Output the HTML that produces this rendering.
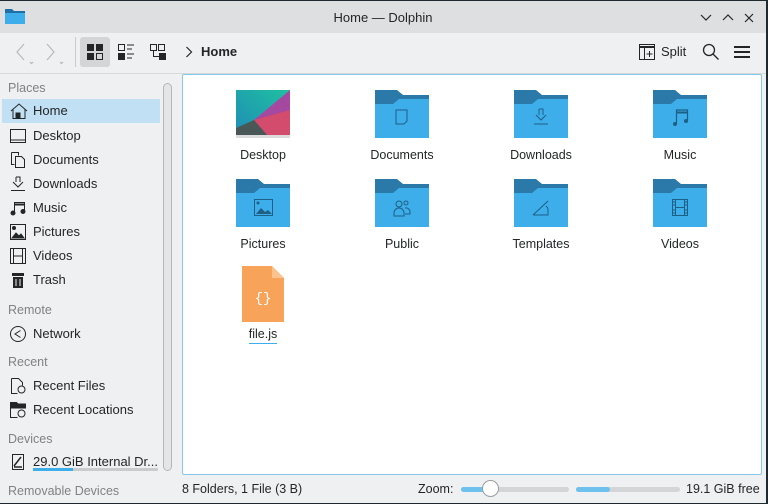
<!DOCTYPE html>
<html><head><meta charset="utf-8">
<style>
*{margin:0;padding:0;box-sizing:border-box}
body{width:768px;height:504px;overflow:hidden;background:#1d2a30;font-family:"Liberation Sans","DejaVu Sans",sans-serif;font-size:13px;color:#232627;position:relative}
.win{position:absolute;left:0;top:1px;width:766px;height:502px;background:#eff0f1}
.title{position:absolute;left:0;top:0;width:766px;height:32px;background:#dedfe0}
.abs{position:absolute}
.side{position:absolute;left:2px;top:75px;width:160px}
.hdr{position:absolute;left:6px;color:#7f8285;font-size:12.5px}
.it{position:absolute;left:0;width:158px;height:24px;line-height:24px;padding-left:31px}
.it svg{position:absolute;left:8px;top:4px}
.view{position:absolute;left:182px;top:73px;width:580px;height:401px;background:#fff;border:1px solid #86c7ea;border-radius:2px}
.cell{position:absolute;width:120px;text-align:center;font-size:12.5px}
.cell svg{display:block;margin:0 auto}
</style></head><body>
<div class="win">
<div class="title">
<svg class="abs" style="left:5px;top:7px" width="20" height="16" viewBox="0 0 20 16"><path d="M0 1h7l2 2h11v13H0z" fill="#1d6fa5"/><path d="M0 5h20v11H0z" fill="#3daee9"/></svg>
<div class="abs" style="left:0;width:766px;top:9px;text-align:center;font-size:13px">Home — Dolphin</div>
<svg class="abs" style="left:700px;top:11px" width="60" height="12" viewBox="0 0 60 12" fill="none" stroke="#232627" stroke-width="1.2"><path d="M1 3l5 5 5-5M23 8l5-5 5 5M45 2l8 8M53 2l-8 8"/></svg>
</div>
<svg class="abs" style="left:14px;top:40px" width="60" height="26" viewBox="0 0 60 26" fill="none" stroke="#b7b9bb" stroke-width="1.2"><path d="M10 3l-7 8 7 8M33 3l7 8-7 8M16 21l1.5 1.5 1.5-1.5M46 21l1.5 1.5 1.5-1.5"/></svg>
<div class="abs" style="left:75px;top:36px;width:1px;height:30px;background:#c8cacc"></div>
<div class="abs" style="left:80px;top:36px;width:30px;height:30px;background:#d3d5d7;border-radius:3px"></div>
<svg class="abs" style="left:87px;top:43px" width="16" height="16" viewBox="0 0 16 16"><rect x="0" y="0" width="7" height="7" fill="#232627"/><rect x="9" y="0" width="7" height="7" fill="#232627"/><rect x="0" y="9" width="7" height="7" fill="#232627"/><rect x="9.5" y="9.5" width="6" height="6" fill="none" stroke="#232627"/></svg>
<svg class="abs" style="left:118px;top:43px" width="16" height="16" viewBox="0 0 16 16"><rect x=".5" y=".5" width="6" height="6" fill="none" stroke="#232627"/><rect x="0" y="9" width="7" height="7" fill="#232627"/><path d="M9 1h7M9 5h5M9 10h7M9 14h5" stroke="#232627"/></svg>
<svg class="abs" style="left:150px;top:43px" width="16" height="16" viewBox="0 0 16 16"><rect x=".5" y=".5" width="6" height="6" fill="none" stroke="#232627"/><rect x="8.5" y=".5" width="6" height="6" fill="none" stroke="#232627"/><rect x="9" y="9" width="7" height="7" fill="#232627"/><path d="M3.5 7v5.5H9" stroke="#232627" fill="none"/></svg>
<svg class="abs" style="left:185px;top:45px" width="8" height="12" viewBox="0 0 8 12"><path d="M1.5 1l5 5-5 5" fill="none" stroke="#232627" stroke-width="1.2"/></svg>
<div class="abs" style="left:201px;top:43px;font-weight:bold">Home</div>
<svg class="abs" style="left:639px;top:43px" width="16" height="16" viewBox="0 0 16 16" fill="none" stroke="#232627"><rect x=".5" y=".5" width="15" height="15"/><path d="M0 3h16" stroke-width="2"/><path d="M5.5 3v13M10.5 7v6M7.5 10h6"/></svg>
<div class="abs" style="left:661px;top:43px">Split</div>
<svg class="abs" style="left:702px;top:42px" width="18" height="18" viewBox="0 0 18 18" fill="none" stroke="#232627" stroke-width="1.3"><circle cx="7" cy="7" r="5.5"/><path d="M11 11l5.5 5.5"/></svg>
<svg class="abs" style="left:734px;top:44px" width="16" height="14" viewBox="0 0 16 14" stroke="#232627" stroke-width="2"><path d="M0 2h16M0 7h16M0 12h16"/></svg>
<div class="abs" style="left:0;top:72px;width:766px;height:1px;background:#d6d8da"></div>
<div class="side">
<div class="hdr" style="top:5px">Places</div>
<div class="it" style="top:23px;background:#c2e0f4">Home<svg width="18" height="16" viewBox="0 0 18 16" fill="none" stroke="#232627"><path d="M1 8L9 1l8 7M3 6v9.5h12V6"/><rect x="6" y="10" width="4" height="6" fill="#232627"/></svg></div>
<div class="it" style="top:48px">Desktop<svg width="16" height="16" viewBox="0 0 16 16" fill="none" stroke="#232627"><rect x=".5" y="1.5" width="15" height="13"/><path d="M1 12h14"/></svg></div>
<div class="it" style="top:72px">Documents<svg width="16" height="16" viewBox="0 0 16 16" fill="none" stroke="#232627"><path d="M1.5 .5h7v3M1.5.5v12h3M5.5 4.5h6l3 3v8h-9z"/></svg></div>
<div class="it" style="top:96px">Downloads<svg width="16" height="16" viewBox="0 0 16 16" fill="none" stroke="#232627"><path d="M6 1h4v5M6 1v5M3 6l5 5 5-5M1 14.5h14"/></svg></div>
<div class="it" style="top:120px">Music<svg width="16" height="16" viewBox="0 0 16 16" fill="#232627" stroke="#232627"><path d="M4.5 13V2.5h10V11" fill="none"/><path d="M4.5 4.5h10" fill="none" stroke-width="2"/><circle cx="3" cy="13" r="2"/><circle cx="13" cy="11.5" r="2"/></svg></div>
<div class="it" style="top:144px">Pictures<svg width="16" height="16" viewBox="0 0 16 16" fill="#232627" stroke="#232627"><rect x=".5" y=".5" width="15" height="15" fill="none"/><circle cx="4" cy="4" r="1.5"/><path d="M2 14l4-5 3 3 2-2 3 4z"/></svg></div>
<div class="it" style="top:168px">Videos<svg width="16" height="16" viewBox="0 0 16 16" fill="none" stroke="#232627"><rect x=".5" y=".5" width="15" height="15"/><path d="M3.5 1v14M12.5 1v14M4 8h8" /></svg></div>
<div class="it" style="top:192px">Trash<svg width="16" height="16" viewBox="0 0 16 16" fill="#232627"><rect x="2" y="1" width="12" height="3"/><rect x="3" y="5" width="10" height="11"/><path d="M6 7v7M10 7v7" stroke="#eff0f1"/></svg></div>
<div class="hdr" style="top:227px">Remote</div>
<div class="it" style="top:246px">Network<svg width="16" height="16" viewBox="0 0 16 16" fill="none" stroke="#232627"><circle cx="8" cy="8" r="7.5"/><path d="M10.5 4.5L5 8l5.5 3.5"/></svg></div>
<div class="hdr" style="top:279px">Recent</div>
<div class="it" style="top:298px">Recent Files<svg width="16" height="16" viewBox="0 0 16 16" fill="none" stroke="#232627"><path d="M1.5 .5h7l4 4v3M1.5.5v15h6"/><circle cx="11.5" cy="11.5" r="3.5"/></svg></div>
<div class="it" style="top:322px">Recent Locations<svg width="16" height="16" viewBox="0 0 16 16" fill="#232627" stroke="#232627"><path d="M0 0h6l2 2h8v4H0z"/><path d="M.5 6v9.5h7" fill="none"/><circle cx="11.5" cy="11.5" r="3.5" fill="none"/></svg></div>
<div class="hdr" style="top:356px">Devices</div>
<div class="it" style="top:374px">29.0 GiB Internal Dr...<svg width="16" height="16" viewBox="0 0 16 16" fill="none" stroke="#232627"><rect x="2.5" y=".5" width="11" height="15"/><path d="M4 12L11 3M4 13h8" stroke-width="1.5"/></svg></div>
<div class="abs" style="left:31px;top:392px;width:125px;height:3px;background:#c9cbcd;border-radius:1px"><div style="width:40px;height:3px;background:#3daee9"></div></div>
<div class="hdr" style="top:408px">Removable Devices</div>
</div>
<div class="abs" style="left:163px;top:82px;width:9px;height:388px;border:1px solid #b5b7b9;border-radius:5px;background:#e3e5e6"></div>
<div class="view">
<svg width="0" height="0" style="position:absolute"><defs>
<g id="f"><path d="M0 0h22l6 5h26v10H0z" fill="#2a79a8"/><path d="M0 14h18l6-5h30v39H0z" fill="#3daee9"/></g>
</defs></svg>
<div class="cell" style="left:20px;top:15px"><svg width="54" height="48" viewBox="0 0 54 48"><defs><linearGradient id="g" x1="0" y1="1" x2="1" y2="0"><stop offset="0" stop-color="#1f8bb7"/><stop offset="1" stop-color="#1fc1a0"/></linearGradient></defs><rect width="54" height="48" fill="url(#g)"/><path d="M54 0L18 30l36 16z" fill="#a448a0"/><path d="M18 30l36-10v26H0z" fill="#d34b6d"/><path d="M0 46V38l18-8 14 16z" fill="#4a5757"/><rect y="45" width="54" height="3" fill="#dcdcdc"/></svg><div style="margin-top:10px">Desktop</div></div>
<div class="cell" style="left:159px;top:15px"><svg width="54" height="48"><use href="#f"/><path d="M21 20h11v11l-3 3h-8z" fill="none" stroke="#1d5f85"/></svg><div style="margin-top:10px">Documents</div></div>
<div class="cell" style="left:298px;top:15px"><svg width="54" height="48"><use href="#f"/><path d="M25 19h4v6M25 19v6M22 25l5 5 5-5M20 34h14" fill="none" stroke="#1d5f85"/></svg><div style="margin-top:10px">Downloads</div></div>
<div class="cell" style="left:437px;top:15px"><svg width="54" height="48"><use href="#f"/><path d="M23.5 34V20h11v11" fill="none" stroke="#1d5f85" stroke-width="1.2"/><path d="M23.5 22.5h11" stroke="#1d5f85" stroke-width="2"/><circle cx="22" cy="34" r="2" fill="#1d5f85"/><circle cx="33" cy="31" r="2" fill="#1d5f85"/></svg><div style="margin-top:10px">Music</div></div>
<div class="cell" style="left:20px;top:104px"><svg width="54" height="49"><use href="#f"/><rect x="18.5" y="20.5" width="18" height="16" fill="none" stroke="#1d5f85"/><circle cx="22" cy="24" r="1.5" fill="#1d5f85"/><path d="M20 35l5-6 4 4 3-2 4 4z" fill="#1d5f85"/></svg><div style="margin-top:9px">Pictures</div></div>
<div class="cell" style="left:159px;top:104px"><svg width="54" height="49"><use href="#f"/><circle cx="24" cy="25" r="3" fill="none" stroke="#1d5f85"/><circle cx="31" cy="24" r="2" fill="none" stroke="#1d5f85"/><path d="M19 37v-3a5 5 0 0 1 10 0v3zM30 29a4 4 0 0 1 5 4v2h-5" fill="none" stroke="#1d5f85"/></svg><div style="margin-top:9px">Public</div></div>
<div class="cell" style="left:298px;top:104px"><svg width="54" height="49"><use href="#f"/><path d="M19 36l15-14M19 36h15v-5a5 5 0 0 0-2-4" fill="none" stroke="#1d5f85"/></svg><div style="margin-top:9px">Templates</div></div>
<div class="cell" style="left:437px;top:104px"><svg width="54" height="49"><use href="#f"/><rect x="19.5" y="20.5" width="15" height="16" fill="none" stroke="#1d5f85"/><path d="M22.5 21v15M31.5 21v15M23 28.5h8M20 23h2M20 26h2M20 31h2M20 34h2M32 23h2M32 26h2M32 31h2M32 34h2" stroke="#1d5f85"/></svg><div style="margin-top:9px">Videos</div></div>
<div class="cell" style="left:20px;top:191px"><svg width="44" height="56" viewBox="0 0 44 56"><path d="M1 0h30l12 12v44H1z" fill="#f8a35a"/><path d="M31 0v12h12z" fill="#fcc38f"/><text x="22" y="36" text-anchor="middle" font-family="Liberation Mono,monospace" font-size="14" fill="#fff">{}</text></svg><div style="margin-top:5px"><span style="border-bottom:1px solid #3daee9;padding-bottom:2px">file.js</span></div></div>
</div>
<div class="abs" style="left:182px;top:481px;font-size:12.5px">8 Folders, 1 File (3 B)</div>
<div class="abs" style="left:418px;top:481px;font-size:12.5px">Zoom:</div>
<div class="abs" style="left:461px;top:486px;width:108px;height:5px;background:#d3d5d7;border-radius:3px"><div style="width:30px;height:5px;background:#6ec1ec;border-radius:3px"></div></div>
<div class="abs" style="left:482px;top:479px;width:17px;height:17px;border-radius:50%;background:#fff;border:1px solid #9a9c9e"></div>
<div class="abs" style="left:576px;top:486px;width:104px;height:5px;background:#d3d5d7;border-radius:3px"><div style="width:34px;height:5px;background:#6ec1ec;border-radius:3px"></div></div>
<div class="abs" style="left:686px;top:481px;font-size:12.5px">19.1 GiB free</div>
</div>
</body></html>
